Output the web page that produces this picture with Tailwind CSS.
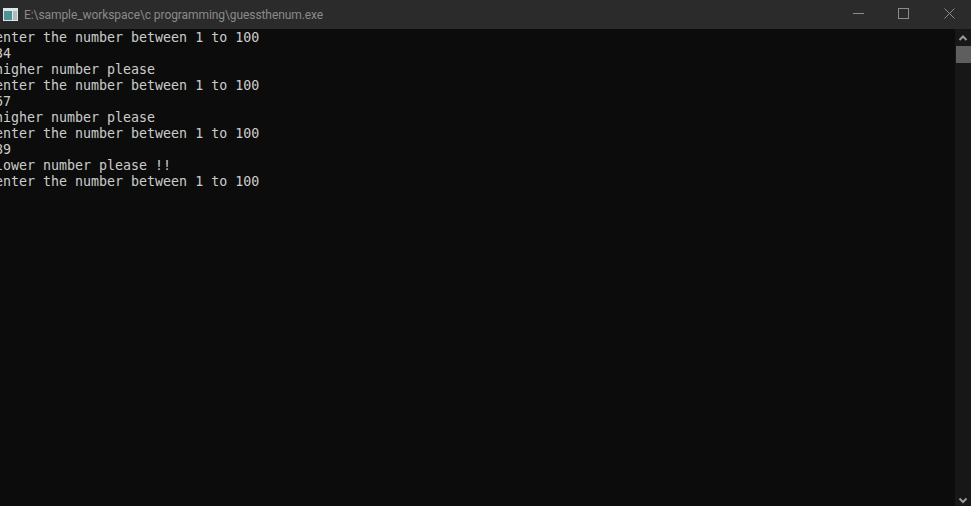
<!DOCTYPE html>
<html lang="en">
<head>
  <meta charset="UTF-8" />
  <meta name="viewport" content="width=device-width, initial-scale=1.0" />
  <title>guessthenum.exe</title>
  <script src="https://cdn.jsdelivr.net/npm/@tailwindcss/browser@4"></script>
</head>
<body class="bg-[#0c0c0c] overflow-hidden">
  <div class="w-[971px] h-[506px] flex flex-col overflow-hidden">

    <!-- Title bar -->
    <div class="h-[29px] bg-[#2b2b2b] flex items-center shrink-0">
      <svg class="ml-[3px] w-[15px] h-[13px] shrink-0" viewBox="0 0 15 13">
        <rect width="15" height="13" fill="#dfe6ea" />
        <rect x="1" y="3" width="8" height="9" fill="#4f9296" />
        <rect x="10" y="3" width="4" height="9" fill="#aebcc2" />
      </svg>
      <span class="ml-[6px] text-[12px] tracking-[-0.08px] text-[#8a8a8a] font-['Roboto',sans-serif] whitespace-nowrap">E:\sample_workspace\c programming\guessthenum.exe</span>
      <div class="ml-auto flex items-center mb-[2px] text-[#8c8c8c]">
        <svg class="w-[11px] h-[11px] mr-[34px]" viewBox="0 0 11 11"><path d="M0 5.5H11" stroke="currentColor" fill="none" /></svg>
        <svg class="w-[11px] h-[11px] mr-[35px]" viewBox="0 0 11 11"><rect x=".5" y=".5" width="10" height="10" stroke="currentColor" fill="none" /></svg>
        <svg class="w-[11px] h-[11px] mr-[16px]" viewBox="0 0 11 11"><path d="M.5 .5L10.5 10.5M10.5 .5L.5 10.5" stroke="currentColor" fill="none" /></svg>
      </div>
    </div>

    <div class="flex flex-1 min-h-0">
      <!-- Console output -->
      <pre class="flex-1 min-w-0 overflow-hidden -ml-[5px] pt-px font-['DejaVu_Sans_Mono',monospace] text-[13.3px] leading-[16px] text-[#cccccc]">enter the number between 1 to 100
34
higher number please
enter the number between 1 to 100
67
higher number please
enter the number between 1 to 100
89
lower number please !!
enter the number between 1 to 100</pre>

      <!-- Scrollbar -->
      <div class="w-[16px] shrink-0 bg-[#171717] flex flex-col items-center justify-between">
        <div class="w-full flex flex-col items-center">
          <svg class="w-[16px] h-[17px]" viewBox="0 0 16 17"><path d="M4.5 11L8 7.5L11.5 11" stroke="#9a9a9a" stroke-width="2" fill="none" /></svg>
          <div class="w-[15px] h-[17px] ml-px bg-[#5e5e5e]"></div>
        </div>
        <svg class="w-[16px] h-[17px]" viewBox="0 0 16 17"><path d="M4.5 9.5L8 13L11.5 9.5" stroke="#9a9a9a" stroke-width="2" fill="none" /></svg>
      </div>
    </div>
  </div>
</body>
</html>
